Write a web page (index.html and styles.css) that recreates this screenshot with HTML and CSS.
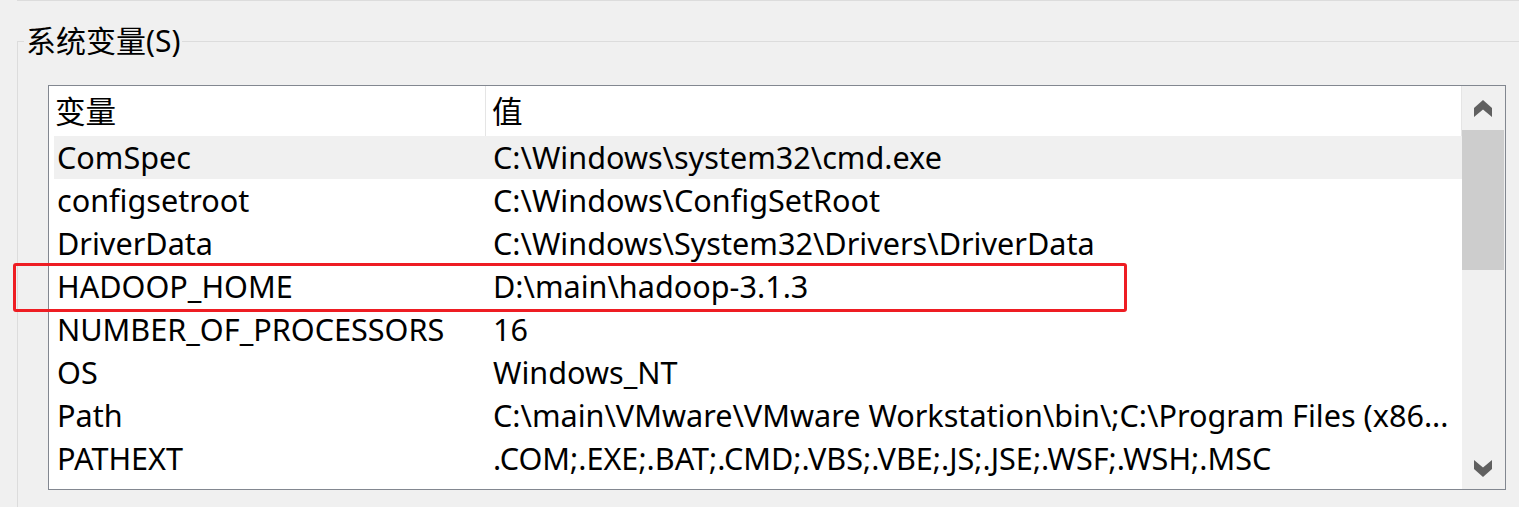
FILE: index.html
```html
<!DOCTYPE html>
<html lang="zh-CN">
<head>
<meta charset="utf-8">
<title>系统变量</title>
<link rel="stylesheet" href="styles.css">
</head>
<body>
<div class="prev-group"></div>
<fieldset class="group">
  <legend class="group-title">系统变量(S)</legend>
  <div class="listbox">
    <div class="list">
      <div class="header">
        <div class="hcell hcol1">变量</div>
        <div class="hcell hcol2">值</div>
      </div>
      <div class="rows">
        <div class="row hover"><div class="cell col1">ComSpec</div><div class="cell col2">C:\Windows\system32\cmd.exe</div></div>
        <div class="row"><div class="cell col1">configsetroot</div><div class="cell col2">C:\Windows\ConfigSetRoot</div></div>
        <div class="row"><div class="cell col1">DriverData</div><div class="cell col2">C:\Windows\System32\Drivers\DriverData</div></div>
        <div class="row"><div class="cell col1">HADOOP_HOME</div><div class="cell col2">D:\main\hadoop-3.1.3</div></div>
        <div class="row"><div class="cell col1">NUMBER_OF_PROCESSORS</div><div class="cell col2">16</div></div>
        <div class="row"><div class="cell col1">OS</div><div class="cell col2">Windows_NT</div></div>
        <div class="row"><div class="cell col1">Path</div><div class="cell col2">C:\main\VMware\VMware Workstation\bin\;C:\Program Files (x86...</div></div>
        <div class="row"><div class="cell col1">PATHEXT</div><div class="cell col2">.COM;.EXE;.BAT;.CMD;.VBS;.VBE;.JS;.JSE;.WSF;.WSH;.MSC</div></div>
      </div>
    </div>
    <div class="scrollbar">
      <div class="sb-btn sb-up">
        <svg width="18" height="17" viewBox="0 0 18 17"><polygon points="9,0 18,8 18,17 9,9.5 0,17 0,8" fill="#606060"/></svg>
      </div>
      <div class="sb-thumb"></div>
      <div class="sb-track"></div>
      <div class="sb-btn sb-down">
        <svg width="18" height="17" viewBox="0 0 18 17"><polygon points="0,0 9,7.5 18,0 18,9 9,17 0,9" fill="#606060"/></svg>
      </div>
    </div>
  </div>
</fieldset>
<div class="highlight"></div>
</body>
</html>
```
FILE: styles.css
```css
html, body {
  margin: 0;
  padding: 0;
}
body {
  background: #f0f0f0;
  font-family: "Noto Sans", "Noto Sans CJK SC", sans-serif;
  font-size: 30.6px;
  color: #000;
  width: 1519px;
  height: 507px;
  overflow: hidden;
  position: relative;
}
.prev-group {
  margin-left: 17px;
  height: 0;
  border-top: 1px solid #dcdcdc;
}
.group {
  margin: 22px 0 0 17px;
  padding: 26px 0 40px 30px;
  border: 1px solid #dcdcdc;
  border-right: none;
  border-bottom: none;
  min-inline-size: 0;
}
.group-title {
  margin-left: -24px;
  padding: 0 2px;
  line-height: 36px;
  font-size: 30px;
}
.listbox {
  width: 1456px;
  height: 403px;
  border: 1px solid #828790;
  background: #fff;
  display: flex;
}
.list {
  width: 1413px;
  overflow: hidden;
}
.header {
  display: flex;
  height: 50px;
  align-items: stretch;
  border-right: 1px solid #e5e5e5;
}
.hcell {
  line-height: 50px;
  padding-left: 6px;
  box-sizing: border-box;
}
.hcol1 {
  width: 437px;
  border-right: 1px solid #e5e5e5;
}
.hcol2 {
  flex: 1;
}
.rows {
  padding-left: 5px;
}
.row {
  display: flex;
  height: 43px;
  line-height: 43px;
}
.row.hover {
  background: #f0f0f0;
}
.cell {
  white-space: nowrap;
  box-sizing: border-box;
}
.col1 {
  width: 431px;
  padding-left: 3px;
}
.col2 {
  flex: 1;
  padding-left: 8px;
  overflow: hidden;
}
.scrollbar {
  width: 43px;
  background: #f0f0f0;
  display: flex;
  flex-direction: column;
}
.sb-btn {
  display: flex;
  align-items: center;
  justify-content: center;
  padding-right: 2px;
}
.sb-up {
  height: 44px;
}
.sb-down {
  height: 42px;
}
.sb-thumb {
  height: 140px;
  margin-right: 1px;
  background: #cdcdcd;
}
.sb-track {
  flex: 1;
}
.highlight {
  position: absolute;
  left: 13px;
  top: 263px;
  width: 1108px;
  height: 43px;
  border: 3px solid #ee1d23;
  border-radius: 3px;
}
```
